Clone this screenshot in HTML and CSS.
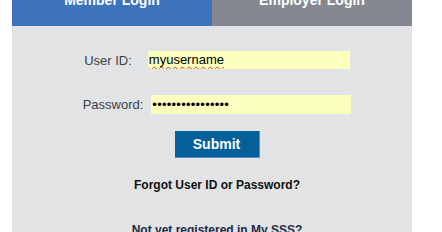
FILE: index.html
```html
<!DOCTYPE html>
<html>
<head>
<meta charset="utf-8">
<link rel="stylesheet" href="styles.css">
</head>
<body>
<div class="panel">
  <div class="tabs">
    <div class="tab tab-member">Member Login</div>
    <div class="tab tab-employer">Employer Login</div>
  </div>
  <form class="login">
    <div class="row row-user">
      <label class="label">User ID:</label>
      <div class="field field-user" role="textbox"><span class="misspelled">myusername</span></div>
    </div>
    <div class="row row-pass">
      <label class="label" for="pwd">Password:</label>
      <input class="field field-pass" id="pwd" type="password" value="abcdefghijklmnop">
    </div>
    <div class="actions">
      <button class="submit" type="button">Submit</button>
    </div>
    <p class="forgot">Forgot User ID or Password?</p>
    <p class="register">Not yet registered in My SSS?</p>
  </form>
</div>
</body>
</html>
```
FILE: styles.css
```css
html, body {
  margin: 0;
  padding: 0;
  background: #ffffff;
  overflow: hidden;
}
body {
  font-family: "Liberation Sans", Arial, sans-serif;
}
.panel {
  width: 400px;
  margin-left: 12px;
  margin-top: -16px;
  background: #e2e3e5;
  min-height: 300px;
}
.tabs {
  display: flex;
}
.tab {
  flex: 1;
  height: 42px;
  box-sizing: border-box;
  padding-top: 8px;
  line-height: 16px;
  text-align: center;
  color: #ffffff;
  font-weight: bold;
  font-size: 14px;
}
.tab-member {
  background: #3d72bc;
}
.tab-employer {
  background: #858891;
}
.login {
  margin: 0;
  padding: 25px 0 0 10px;
  display: flex;
  flex-direction: column;
  align-items: center;
}
.row {
  display: flex;
  align-items: center;
}
.label {
  font-size: 13px;
  color: #3e4147;
}
.field {
  border: 0;
  margin: 0;
  padding: 0 1px;
  height: 18px;
  box-sizing: border-box;
  background: #faffbd;
  font-family: "Liberation Sans", Arial, sans-serif;
  font-size: 13px;
  color: #000;
  outline: none;
}
.field-user {
  width: 202px;
  margin-left: 16px;
  line-height: 18px;
  white-space: nowrap;
  overflow: hidden;
}
.misspelled {
  text-decoration: underline wavy #e53030;
  text-decoration-thickness: 1px;
  text-underline-offset: 2px;
  text-decoration-skip-ink: none;
}
.row-pass {
  margin-top: 26px;
}
.field-pass {
  width: 200px;
  height: 19px;
  margin-left: 8px;
  letter-spacing: 0.25px;
}
.actions {
  margin-top: 17px;
}
.submit {
  width: 85px;
  height: 27px;
  margin: 0;
  padding: 0;
  border: 0;
  border-right: 1px solid #4f8fbd;
  border-bottom: 1px solid #4f8fbd;
  background: #05609a;
  color: #fff;
  font-family: "Liberation Sans", Arial, sans-serif;
  font-weight: bold;
  font-size: 14px;
}
.forgot {
  margin: 20px 0 0;
  font-size: 12px;
  font-weight: bold;
  color: #111;
}
.register {
  margin: 31px 0 0;
  font-size: 12px;
  font-weight: bold;
  color: #1e2a44;
}
```
